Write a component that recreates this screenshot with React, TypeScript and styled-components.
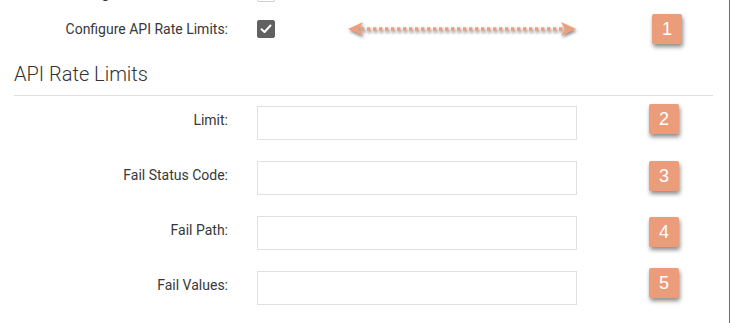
import React from 'react';
import styled, { createGlobalStyle } from 'styled-components';

const GlobalStyle = createGlobalStyle`
  html, body {
    margin: 0;
    padding: 0;
    background: #fff;
  }
`;

const Frame = styled.div`
  width: 730px;
  height: 323px;
  box-sizing: border-box;
  overflow: hidden;
  background: #fff;
  border-right: 1px solid #6e6e6e;
  font-family: Roboto, "Liberation Sans", sans-serif;
  color: #383838;
`;

const Form = styled.div`
  margin-top: -25px;
  padding: 0 16px 0 14px;
  display: flex;
  flex-direction: column;
`;

const Row = styled.div<{ $h: number; $gap?: number }>`
  display: grid;
  grid-template-columns: 214px 320px auto;
  column-gap: 29px;
  align-items: center;
  height: ${(p) => p.$h}px;
  margin-bottom: ${(p) => p.$gap || 0}px;
`;

const Label = styled.label<{ $lift?: number }>`
  font-size: 14px;
  text-align: right;
  white-space: nowrap;
  margin-bottom: ${(p) => (p.$lift || 0) * 2}px;
`;

const Control = styled.div`
  display: flex;
  align-items: center;
  gap: 73px;
`;

const Checkbox = styled.span<{ $checked?: boolean }>`
  width: 18px;
  height: 18px;
  box-sizing: border-box;
  border-radius: 2px;
  display: flex;
  align-items: center;
  justify-content: center;
  background: ${(p) => (p.$checked ? '#616161' : '#fff')};
  border: 1px solid ${(p) => (p.$checked ? '#616161' : '#cfcfcf')};
`;

const Input = styled.input`
  width: 320px;
  height: 34px;
  box-sizing: border-box;
  border: 1px solid #e0e0e0;
  border-radius: 0;
  background: #fff;
  padding: 6px 10px;
  font: 14px Roboto, sans-serif;
  outline: none;
`;

const Badge = styled.div<{ $x: number; $y: number }>`
  align-self: start;
  justify-self: start;
  margin-left: ${(p) => p.$x}px;
  margin-top: ${(p) => p.$y}px;
  width: 30px;
  height: 30px;
  border-radius: 2px;
  background: #eb9d7b;
  color: #fff;
  font: 18px "Liberation Sans", Arial, sans-serif;
  display: flex;
  align-items: center;
  justify-content: center;
  box-shadow: 1px 3px 4px rgba(0, 0, 0, 0.45);
`;

const Heading = styled.h2`
  margin: 14px 0 8px;
  font-size: 20px;
  line-height: 26px;
  font-weight: 300;
  color: #333;
`;

const Divider = styled.hr`
  margin: 0 0 10px;
  border: 0;
  border-top: 1px solid #dedede;
  height: 0;
`;

const Arrow = styled.svg`
  display: block;
  overflow: visible;
  filter: drop-shadow(1px 2px 1.5px rgba(0, 0, 0, 0.45));
`;

function CheckMark() {
  return (
    <svg width="12" height="10" viewBox="0 0 12 10">
      <polyline points="1.5,5.2 4.5,8 10.5,1.5" fill="none" stroke="#fff" strokeWidth="2" strokeLinecap="round" strokeLinejoin="round" />
    </svg>
  );
}

function DoubleArrow() {
  return (
    <Arrow width="228" height="16" viewBox="0 0 228 16">
      <line x1="13" y1="8" x2="215" y2="8" stroke="#ee9e7c" strokeWidth="3.4" strokeDasharray="3.4 2.6" />
      <path d="M0 8 L15 1 L11 8 L15 15 Z" fill="#ee9e7c" />
      <path d="M228 8 L213 1 L217 8 L213 15 Z" fill="#ee9e7c" />
    </Arrow>
  );
}

const fields = [
  { label: 'Limit:', n: 2, y: -2, gap: 21 },
  { label: 'Fail Status Code:', n: 3, y: 0, gap: 21 },
  { label: 'Fail Path:', n: 4, y: 1, gap: 21 },
  { label: 'Fail Values:', n: 5, y: -3, gap: 0 },
];

export default function App() {
  return (
    <Frame>
      <GlobalStyle />
      <Form>
        <Row $h={36}>
          <Label>Enabling Header Forwarder:</Label>
          <Control>
            <Checkbox />
          </Control>
        </Row>
        <Row $h={36}>
          <Label>Configure API Rate Limits:</Label>
          <Control>
            <Checkbox $checked>
              <CheckMark />
            </Checkbox>
            <DoubleArrow />
          </Control>
          <Badge $x={46} $y={3}>1</Badge>
        </Row>

        <Heading>API Rate Limits</Heading>
        <Divider />

        {fields.map((f) => (
          <Row key={f.n} $h={34} $gap={f.gap}>
            <Label $lift={3}>{f.label}</Label>
            <Input type="text" />
            <Badge $x={43} $y={f.y}>{f.n}</Badge>
          </Row>
        ))}
      </Form>
    </Frame>
  );
}
